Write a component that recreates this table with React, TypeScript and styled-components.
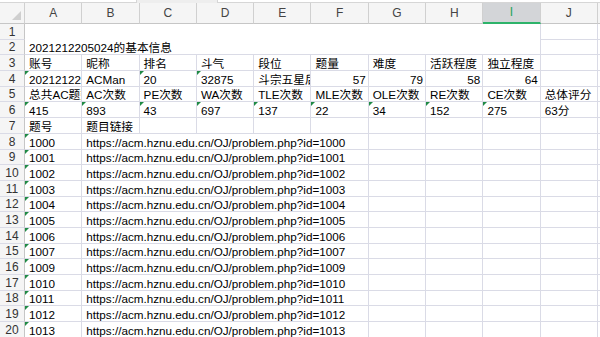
import React from "react";
import styled, { createGlobalStyle } from "styled-components";

const GlobalStyle = createGlobalStyle`
  html, body { margin: 0; padding: 0; background: #ffffff; overflow: hidden; }
  body { font-family: "Liberation Sans", Arial, "Noto Sans CJK SC", sans-serif; }
`;

const GRID = "#dadbe6";
const HEAD_LINE = "#d0d0d0";

const Page = styled.div`
  width: 600px;
  height: 337px;
  overflow: hidden;
  display: flex;
  flex-direction: column;
  background: #fff;
`;

const TopStrip = styled.div`
  height: 3px;
  flex: none;
  display: flex;
  background: #eeeeee;
`;

const NameBox = styled.div`
  width: 137px;
  background: #fff;
  border-right: 1px solid #d6d6d6;
  border-bottom: 1px solid #d6d6d6;
  box-sizing: border-box;
`;

const FormulaBox = styled.div`
  flex: 1;
  margin-left: 80px;
  background: #fff;
  border-left: 1px solid #d6d6d6;
  border-bottom: 1px solid #d6d6d6;
  box-sizing: border-box;
`;

const Sheet = styled.div`
  display: grid;
  grid-template-columns: 25px repeat(11, 57.3px);
  grid-template-rows: 21px repeat(20, 15.7px);
  font-family: "Liberation Sans", Arial, "Noto Sans CJK SC", sans-serif;
  font-size: 11.7px;
  color: #000;
`;

const Corner = styled.div`
  grid-column: 1;
  grid-row: 1;
  background: #f5f5f5;
  border-right: 1px solid ${HEAD_LINE};
  border-bottom: 1px solid #c6c6c6;
  box-sizing: border-box;
  position: relative;
  &::after {
    content: "";
    position: absolute;
    right: 3px;
    bottom: 3px;
    width: 0;
    height: 0;
    border-left: 9px solid transparent;
    border-bottom: 9px solid #cfcfcf;
  }
`;

const ColHeader = styled.div<{ $col: number; $selected?: boolean }>`
  grid-column: ${(p) => p.$col};
  grid-row: 1;
  box-sizing: border-box;
  display: flex;
  align-items: flex-end;
  justify-content: center;
  padding-bottom: 3px;
  font-size: 12px;
  line-height: 14px;
  color: ${(p) => (p.$selected ? "#21a35a" : "#444")};
  background: ${(p) => (p.$selected ? "#d3d5d8" : "#f5f5f5")};
  border-right: 1px solid ${HEAD_LINE};
  border-bottom: ${(p) => (p.$selected ? "2px solid #2db36a" : "1px solid #c6c6c6")};
`;

const RowHeader = styled.div<{ $row: number }>`
  grid-column: 1;
  grid-row: ${(p) => p.$row};
  box-sizing: border-box;
  display: flex;
  align-items: flex-end;
  justify-content: center;
  font-size: 12px;
  line-height: 13px;
  color: #333;
  background: #f5f5f5;
  border-right: 1px solid #c6c6c6;
  border-bottom: 1px solid ${GRID};
`;

const Cell = styled.div<{
  $col: number;
  $row: number;
  $span?: number;
  $rspan?: number;
  $right?: boolean;
  $flag?: boolean;
}>`
  grid-column: ${(p) => `${p.$col} / span ${p.$span ?? 1}`};
  grid-row: ${(p) => `${p.$row} / span ${p.$rspan ?? 1}`};
  position: relative;
  box-sizing: border-box;
  display: flex;
  align-items: flex-end;
  justify-content: ${(p) => (p.$right ? "flex-end" : "flex-start")};
  padding: 0 ${(p) => (p.$right ? "2px" : "3px")} 0 4px;
  overflow: hidden;
  white-space: nowrap;
  line-height: 13px;
  border-right: 1px solid ${GRID};
  border-bottom: 1px solid ${GRID};
  ${(p) =>
    p.$flag
      ? `&::before {
    content: "";
    position: absolute;
    left: 0;
    top: 0;
    width: 0;
    height: 0;
    border-top: 4px solid #1f8a45;
    border-right: 4px solid transparent;
  }`
      : ""}
`;

type CellDef = { t?: string; r?: boolean; f?: boolean; span?: number; rspan?: number };

const COLS = ["A", "B", "C", "D", "E", "F", "G", "H", "I", "J", "K"];

const ids = ["1000", "1001", "1002", "1003", "1004", "1005", "1006", "1007", "1009", "1010", "1011", "1012", "1013"];

const data: Record<number, Record<number, CellDef>> = {
  1: { 1: { t: "2021212205024的基本信息", span: 9, rspan: 2 } },
  3: {
    1: { t: "账号" },
    2: { t: "昵称" },
    3: { t: "排名" },
    4: { t: "斗气" },
    5: { t: "段位" },
    6: { t: "题量" },
    7: { t: "难度" },
    8: { t: "活跃程度" },
    9: { t: "独立程度" },
  },
  4: {
    1: { t: "2021212205024", f: true },
    2: { t: "ACMan" },
    3: { t: "20", f: true },
    4: { t: "32875", f: true },
    5: { t: "斗宗五星后期" },
    6: { t: "57", r: true },
    7: { t: "79", r: true },
    8: { t: "58", r: true },
    9: { t: "64", r: true },
  },
  5: {
    1: { t: "总共AC题数" },
    2: { t: "AC次数" },
    3: { t: "PE次数" },
    4: { t: "WA次数" },
    5: { t: "TLE次数" },
    6: { t: "MLE次数" },
    7: { t: "OLE次数" },
    8: { t: "RE次数" },
    9: { t: "CE次数" },
    10: { t: "总体评分" },
  },
  6: {
    1: { t: "415", f: true },
    2: { t: "893", f: true },
    3: { t: "43", f: true },
    4: { t: "697", f: true },
    5: { t: "137", f: true },
    6: { t: "22", f: true },
    7: { t: "34", f: true },
    8: { t: "152", f: true },
    9: { t: "275", f: true },
    10: { t: "63分" },
  },
  7: { 1: { t: "题号" }, 2: { t: "题目链接" } },
};

ids.forEach((id, i) => {
  data[8 + i] = {
    1: { t: id, f: true },
    2: { t: `https://acm.hznu.edu.cn/OJ/problem.php?id=${id}`, span: 5 },
  };
});

function buildCells() {
  const covered = new Set<string>();
  const out: React.ReactNode[] = [];
  for (let r = 1; r <= 20; r++) {
    for (let c = 1; c <= COLS.length; c++) {
      const key = `${r}-${c}`;
      if (covered.has(key)) continue;
      const def = data[r]?.[c];
      const span = def?.span ?? 1;
      const rspan = def?.rspan ?? 1;
      for (let dr = 0; dr < rspan; dr++)
        for (let dc = 0; dc < span; dc++) covered.add(`${r + dr}-${c + dc}`);
      out.push(
        <Cell
          key={key}
          $row={r + 1}
          $col={c + 1}
          $span={span}
          $rspan={rspan}
          $right={def?.r}
          $flag={def?.f}
        >
          {def?.t ?? ""}
        </Cell>
      );
    }
  }
  return out;
}

export default function App() {
  return (
    <Page>
      <GlobalStyle />
      <TopStrip>
        <NameBox />
        <FormulaBox />
      </TopStrip>
      <Sheet>
        <Corner />
        {COLS.map((c, i) => (
          <ColHeader key={c} $col={i + 2} $selected={c === "I"}>
            {c}
          </ColHeader>
        ))}
        {Array.from({ length: 20 }, (_, i) => (
          <RowHeader key={i} $row={i + 2}>
            {i + 1}
          </RowHeader>
        ))}
        {buildCells()}
      </Sheet>
    </Page>
  );
}
